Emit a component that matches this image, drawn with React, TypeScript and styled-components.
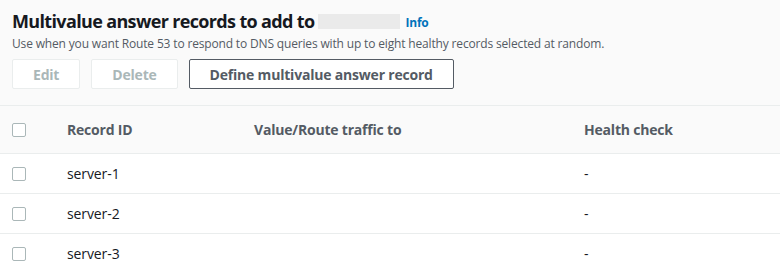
import styled, { createGlobalStyle } from "styled-components";

const GlobalStyle = createGlobalStyle`
  html, body {
    margin: 0;
    padding: 0;
    background: #fafafa;
    font-family: "Open Sans", "Noto Sans", Arial, sans-serif;
    color: #16191f;
  }
`;

const Page = styled.div`
  width: 780px;
  height: 269px;
  overflow: hidden;
  background: #fafafa;
`;

const Header = styled.header`
  padding: 10px 12px 16px 12px;
`;

const TitleRow = styled.div`
  display: flex;
  align-items: center;
  gap: 4px;
`;

const Title = styled.h2`
  margin: 0;
  font-size: 18px;
  line-height: 22px;
  font-weight: 700;
  letter-spacing: -0.65px;
  color: #16191f;
`;

const Redacted = styled.span`
  display: inline-block;
  width: 82px;
  height: 15px;
  background: #eaeaea;
  margin-top: 1px;
`;

const InfoLink = styled.a`
  font-size: 12px;
  font-weight: 700;
  letter-spacing: -0.2px;
  color: #0073bb;
  margin-left: 1px;
  margin-top: 2px;
  text-decoration: none;
`;

const Description = styled.p`
  margin: 4px 0 0 0;
  font-size: 12px;
  line-height: 16px;
  letter-spacing: -0.16px;
  color: #545b64;
`;

const Actions = styled.div`
  display: flex;
  gap: 11px;
  margin-top: 7px;
`;

const Button = styled.button<{ $disabled?: boolean }>`
  height: 30px;
  padding: 0 20px;
  font-family: inherit;
  font-size: 14px;
  font-weight: 700;
  letter-spacing: -0.2px;
  border-radius: 2px;
  background: #ffffff;
  border: 1px solid ${(p) => (p.$disabled ? "#eaeded" : "#545b64")};
  color: ${(p) => (p.$disabled ? "#aab7b8" : "#545b64")};
  cursor: ${(p) => (p.$disabled ? "default" : "pointer")};
`;

const Table = styled.table`
  width: 100%;
  border-collapse: collapse;
  table-layout: fixed;
  border-top: 1px solid #eaeded;
`;

const HeadCell = styled.th<{ $width?: number }>`
  position: relative;
  box-sizing: border-box;
  width: ${(p) => (p.$width ? `${p.$width}px` : "auto")};
  height: 48px;
  padding: 0 0 0 21px;
  text-align: left;
  font-size: 14px;
  font-weight: 700;
  letter-spacing: -0.2px;
  color: #545b64;
  background: #fafafa;
  border-bottom: 1px solid #eaeded;

  &:first-child {
    padding-left: 12px;
  }

  & + &::before {
    content: "";
    position: absolute;
    left: 0;
    top: 12px;
    height: 23px;
    border-left: 1px solid #e1e4e4;
  }
`;

const Row = styled.tr`
  background: #ffffff;
`;

const Cell = styled.td`
  box-sizing: border-box;
  height: 40px;
  padding: 0 0 0 21px;
  font-size: 14px;
  letter-spacing: -0.1px;
  color: #16191f;
  border-bottom: 1px solid #eaeded;

  &:first-child {
    padding-left: 12px;
  }
`;

const Box = styled.span`
  display: block;
  width: 12px;
  height: 12px;
  border: 1px solid #aab7b8;
  border-radius: 2px;
  background: #ffffff;
`;

const records = ["server-1", "server-2", "server-3"];

export default function App() {
  return (
    <Page>
      <GlobalStyle />
      <Header>
        <TitleRow>
          <Title>Multivalue answer records to add to</Title>
          <Redacted />
          <InfoLink href="#">Info</InfoLink>
        </TitleRow>
        <Description>
          Use when you want Route 53 to respond to DNS queries with up to eight
          healthy records selected at random.
        </Description>
        <Actions>
          <Button $disabled>Edit</Button>
          <Button $disabled>Delete</Button>
          <Button>Define multivalue answer record</Button>
        </Actions>
      </Header>
      <Table>
        <thead>
          <tr>
            <HeadCell $width={46}>
              <Box />
            </HeadCell>
            <HeadCell $width={187}>Record ID</HeadCell>
            <HeadCell $width={330}>Value/Route traffic to</HeadCell>
            <HeadCell>Health check</HeadCell>
          </tr>
        </thead>
        <tbody>
          {records.map((id) => (
            <Row key={id}>
              <Cell>
                <Box />
              </Cell>
              <Cell>{id}</Cell>
              <Cell />
              <Cell>-</Cell>
            </Row>
          ))}
        </tbody>
      </Table>
    </Page>
  );
}
